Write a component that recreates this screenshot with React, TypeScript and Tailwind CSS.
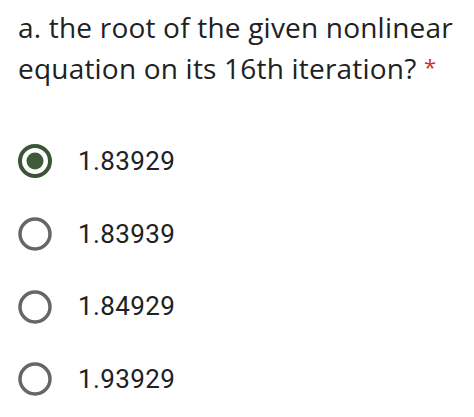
import React from "react";

const OPTIONS = [
  { label: "1.83929", checked: true },
  { label: "1.83939", checked: false },
  { label: "1.84929", checked: false },
  { label: "1.93929", checked: false },
];

function Radio({ checked }: { checked: boolean }) {
  return (
    <svg width="36" height="36" viewBox="0 0 36 36" className="shrink-0">
      <circle
        cx="18"
        cy="18"
        r="15"
        fill="none"
        stroke={checked ? "#3b5536" : "#666666"}
        strokeWidth={checked ? 4 : 3.5}
      />
      {checked && <circle cx="18" cy="18" r="8.5" fill="#3f5a39" />}
    </svg>
  );
}

export default function App() {
  return (
    <div className="w-[474px] h-[417px] bg-white overflow-hidden">
      {/* Question */}
      <div
        className="pl-[18px] pr-2 pt-[7px] text-[28px] leading-[41px] tracking-[0.2px] text-[#202124]"
        style={{ fontFamily: '"Open Sans", sans-serif' }}
      >
        a. the root of the given nonlinear
        <br />
        equation on its 16th iteration?{" "}
        <span className="text-[#d93025] text-[22px] relative -top-[4px]">*</span>
      </div>

      {/* Options */}
      <div className="mt-[34px] pl-[17px] flex flex-col" style={{ fontFamily: "Roboto, sans-serif" }}>
        {OPTIONS.map(({ label, checked }) => (
          <div key={label} className="h-[72.7px] flex items-center gap-[25px]">
            <Radio checked={checked} />
            <span className="text-[26px] tracking-[0.4px] text-[#202124]">{label}</span>
          </div>
        ))}
      </div>
    </div>
  );
}
